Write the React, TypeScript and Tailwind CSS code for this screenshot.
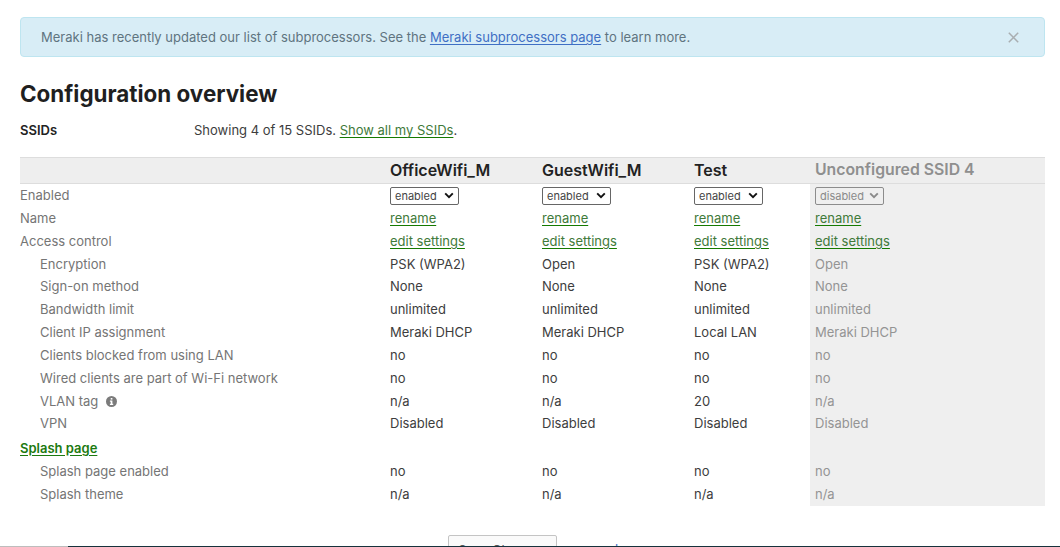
const font = "font-['Inter','Noto_Sans',sans-serif]";

type Row = {
  label: string;
  sub?: boolean;
  info?: boolean;
  heading?: boolean;
  h: string;
  cells?: string[];
};

const rows: Row[] = [
  { label: "Encryption", sub: true, h: "h-[23px]", cells: ["PSK (WPA2)", "Open", "PSK (WPA2)", "Open"] },
  { label: "Sign-on method", sub: true, h: "h-[22px]", cells: ["None", "None", "None", "None"] },
  { label: "Bandwidth limit", sub: true, h: "h-[23px]", cells: ["unlimited", "unlimited", "unlimited", "unlimited"] },
  { label: "Client IP assignment", sub: true, h: "h-[23px]", cells: ["Meraki DHCP", "Meraki DHCP", "Local LAN", "Meraki DHCP"] },
  { label: "Clients blocked from using LAN", sub: true, h: "h-[23px]", cells: ["no", "no", "no", "no"] },
  { label: "Wired clients are part of Wi-Fi network", sub: true, h: "h-[23px]", cells: ["no", "no", "no", "no"] },
  { label: "VLAN tag", sub: true, info: true, h: "h-[23px]", cells: ["n/a", "n/a", "20", "n/a"] },
  { label: "VPN", sub: true, h: "h-[22px]", cells: ["Disabled", "Disabled", "Disabled", "Disabled"] },
  { label: "Splash page", heading: true, h: "h-[25px]" },
  { label: "Splash page enabled", sub: true, h: "h-[23px]", cells: ["no", "no", "no", "no"] },
  { label: "Splash theme", sub: true, h: "h-[23px]", cells: ["n/a", "n/a", "n/a", "n/a"] },
];

const greenLink = "text-[#3f7a3a] underline decoration-[#157a00] underline-offset-2";

function Select({ value, off }: { value: string; off?: boolean }) {
  return (
    <div className={`flex h-[18px] w-[69px] items-center justify-between rounded-[2px] border pl-[4px] pr-[4px] text-[11px] ${off ? "border-[#8c8c8c] text-[#8a8a8a]" : "border-[#666666] text-[#444444]"}`}>
      <span className="pt-[1px]">{value}</span>
      <svg width="10" height="7" viewBox="0 0 10 7" fill="none">
        <path d="M1.2 1.4 5 5.2l3.8-3.8" stroke={off ? "#8a8a8a" : "#111111"} strokeWidth="1.9" />
      </svg>
    </div>
  );
}

function Columns({ h, children }: { h: string; children: React.ReactNode[] }) {
  return (
    <div className={`grid grid-cols-[152px_152px_116px_235px] ${h}`}>
      {children}
    </div>
  );
}

function Cell({ off, children }: { off?: boolean; children?: React.ReactNode }) {
  return (
    <div className={off ? "flex items-center bg-[#efefef] pl-[5px] text-[#949494]" : "flex items-center text-[#3d3d3d]"}>
      {children}
    </div>
  );
}

function Label({ children }: { children: React.ReactNode }) {
  return <div className="flex h-full w-[370px] shrink-0 items-center text-[#757575]">{children}</div>;
}

export default function App() {
  return (
    <div className={`relative h-[547px] w-[1060px] overflow-hidden bg-white text-[13px] ${font}`}>
      <div className="px-5 pt-[17px] pr-[15px]">
        <div className="flex h-10 items-center justify-between rounded-[4px] border border-[#bee5f0] bg-[#d8edf6] pl-5 pr-[25px] text-[#5f7480]">
          <span className="pt-[2px]">
            Meraki has recently updated our list of subprocessors. See the{" "}
            <a className="text-[#3f6fc4] underline underline-offset-2">Meraki subprocessors page</a> to learn more.
          </span>
          <svg width="11" height="11" viewBox="0 0 11 11" fill="none">
            <path d="M.8.8l9.4 9.4M10.2.8.8 10.2" stroke="#a9aeb1" strokeWidth="1.5" />
          </svg>
        </div>

        <h1 className="mt-[20px] text-[22.4px] leading-[34px] font-bold text-[#1f1f1f]">Configuration overview</h1>

        <div className="mt-[9px] flex h-[20px] items-center pt-[2px]">
          <div className="w-[174px] font-semibold text-[#222222]">SSIDs</div>
          <div className="text-[#3d3d3d]">
            Showing 4 of 15 SSIDs. <a className={greenLink}>Show all my SSIDs</a>.
          </div>
        </div>

        <div className="mt-[17px]">
          <div className="flex h-[27px] items-center border-y border-[#dddddd] bg-[#eeeeee] pb-[2px] text-[16px] font-semibold text-[#222222]">
            <div className="w-[370px]" />
            <div className="w-[152px]">OfficeWifi_M</div>
            <div className="w-[152px]">GuestWifi_M</div>
            <div className="w-[121px]">Test</div>
            <div className="text-[15.8px] text-[#8f8f8f]">Unconfigured SSID 4</div>
          </div>

          <div className="flex h-[23px]">
            <Label>Enabled</Label>
            <Columns h="h-[23px]">
              <Cell><Select value="enabled" /></Cell>
              <Cell><Select value="enabled" /></Cell>
              <Cell><Select value="enabled" /></Cell>
              <Cell off><Select value="disabled" off /></Cell>
            </Columns>
          </div>

          {["rename", "edit settings"].map((text, i) => (
            <div key={text} className="flex h-[23px]">
              <Label>{i === 0 ? "Name" : "Access control"}</Label>
              <Columns h="h-[23px]">
                <Cell><a className={greenLink}>{text}</a></Cell>
                <Cell><a className={greenLink}>{text}</a></Cell>
                <Cell><a className={greenLink}>{text}</a></Cell>
                <Cell off><a className={greenLink}>{text}</a></Cell>
              </Columns>
            </div>
          ))}

          {rows.map((row) => (
            <div key={row.label} className={`flex ${row.h}`}>
              <Label>
                {row.heading ? (
                  <a className="pt-[2px] font-semibold text-[#1c7a10] underline underline-offset-2">{row.label}</a>
                ) : (
                  <span className="flex items-center pl-5">
                    {row.label}
                    {row.info && (
                      <svg className="ml-[8px]" width="11" height="11" viewBox="0 0 11 11">
                        <circle cx="5.5" cy="5.5" r="5.5" fill="#7b7b7b" />
                        <rect x="4.7" y="2" width="1.7" height="1.6" fill="#ffffff" />
                        <path d="M3.9 4.6h2.5v3.2h.8V9H3.9V7.8h.8V5.8h-.8z" fill="#ffffff" />
                      </svg>
                    )}
                  </span>
                )}
              </Label>
              <Columns h={row.h}>
                <Cell>{row.cells?.[0]}</Cell>
                <Cell>{row.cells?.[1]}</Cell>
                <Cell>{row.cells?.[2]}</Cell>
                <Cell off>{row.cells?.[3]}</Cell>
              </Columns>
            </div>
          ))}
        </div>

        <div className="mt-[29px] ml-[428px] flex items-start gap-[4px]">
          <div className="h-[30px] w-[109px] rounded-[2px] border border-[#c4c4c4] bg-[#fafafa] pt-[5px] text-center text-[#555555]">
            Save Changes
          </div>
          <div className="pt-[5px] text-[#888888]">
            or <span className="text-[#3f6fc4]">cancel</span>
          </div>
        </div>
      </div>

      <div className="absolute bottom-0 left-0 h-px w-[68px] bg-[#bdbdbd]" />
      <div className="absolute bottom-0 left-[68px] h-px w-[992px] bg-[#17323c]" />
    </div>
  );
}
